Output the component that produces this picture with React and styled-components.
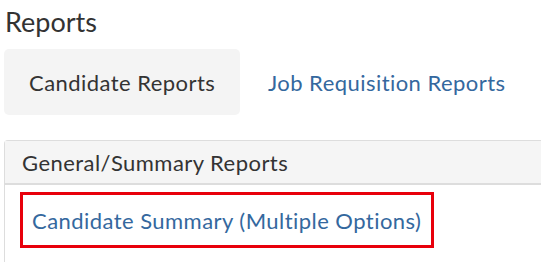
import React from 'react';
import styled, {createGlobalStyle} from 'styled-components';

const Global=createGlobalStyle`
    html,body{
        margin:0;
        padding:0;
        background:#fff;
        overflow:hidden;
    }
    body{
        font-family:Lato,"Liberation Sans",sans-serif;
        color:#333;
    }
`

const Page=styled.div`
    width:560px;
    padding:0 0 0 4px;
`

const Title=styled.h1`
    margin:0;
    padding:6px 0 0 1px;
    height:49px;
    box-sizing:border-box;
    font-size:27px;
    font-weight:400;
    line-height:32px;
    color:#333;
`

const Tabs=styled.div`
    display:flex;
    align-items:center;
    height:66px;
    margin-bottom:25px;
`

const Tab=styled.div`
    height:100%;
    display:flex;
    align-items:center;
    padding:0 0 0 ${props=>props.active?25:28}px;
    width:${props=>props.width}px;
    box-sizing:border-box;
    border-radius:5px;
    font-size:22px;
    letter-spacing:0.45px;
    background:${props=>props.active?'#f4f4f4':'transparent'};
    color:${props=>props.active?'#333':'#34689e'};
`

const Panel=styled.div`
    border:1px solid #ddd;
    border-bottom:0;
    border-radius:4px 4px 0 0;
    height:130px;
`

const PanelHeader=styled.div`
    height:44px;
    box-sizing:border-box;
    background:#f5f5f5;
    border-bottom:2px solid #ddd;
    padding:0 0 0 17px;
    display:flex;
    align-items:center;
    font-size:22px;
    letter-spacing:0.45px;
`

const PanelBody=styled.div`
    padding:7px 0 0 15px;
`

const Highlight=styled.div`
    width:414px;
    height:56px;
    box-sizing:border-box;
    border:3px solid #e8000b;
    display:flex;
    align-items:center;
    padding-left:9px;
    font-size:22px;
    letter-spacing:0.45px;
    color:#34689e;
`

export default function App(){
    return(
        <Page>
            <Global/>
            <Title>Reports</Title>
            <Tabs>
                <Tab active width={236}>Candidate Reports</Tab>
                <Tab width={280}>Job Requisition Reports</Tab>
            </Tabs>
            <Panel>
                <PanelHeader>General/Summary Reports</PanelHeader>
                <PanelBody>
                    <Highlight>Candidate Summary (Multiple Options)</Highlight>
                </PanelBody>
            </Panel>
        </Page>
    )
}
